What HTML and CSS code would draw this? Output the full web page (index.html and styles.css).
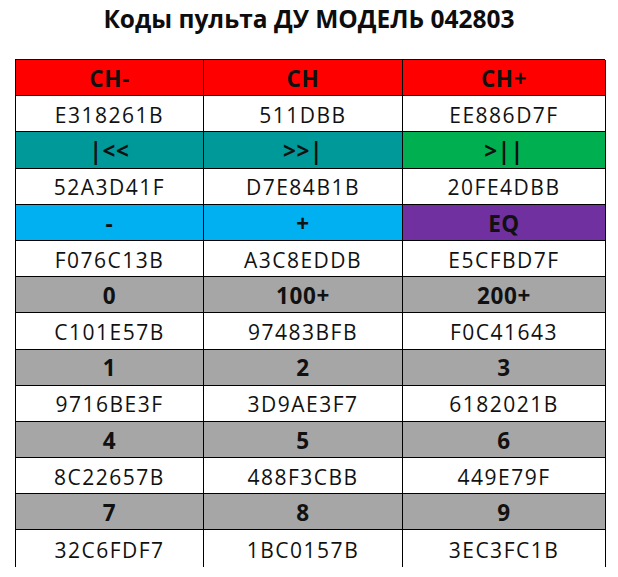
FILE: index.html
```html
<!DOCTYPE html>
<html lang="ru">
<head>
<meta charset="utf-8">
<title>Коды пульта ДУ МОДЕЛЬ 042803</title>
<link rel="stylesheet" href="styles.css">
</head>
<body>
<h1 class="title">Коды пульта ДУ МОДЕЛЬ 042803</h1>
<div class="table">
  <div class="cell head red">CH-</div>
  <div class="cell head red">CH</div>
  <div class="cell head red">CH+</div>
  <div class="cell code">E318261B</div>
  <div class="cell code">511DBB</div>
  <div class="cell code">EE886D7F</div>

  <div class="cell head teal">|&lt;&lt;</div>
  <div class="cell head teal">&gt;&gt;|</div>
  <div class="cell head green">&gt;||</div>
  <div class="cell code">52A3D41F</div>
  <div class="cell code">D7E84B1B</div>
  <div class="cell code">20FE4DBB</div>

  <div class="cell head blue">-</div>
  <div class="cell head blue">+</div>
  <div class="cell head purple">EQ</div>
  <div class="cell code">F076C13B</div>
  <div class="cell code">A3C8EDDB</div>
  <div class="cell code">E5CFBD7F</div>

  <div class="cell head gray">0</div>
  <div class="cell head gray">100+</div>
  <div class="cell head gray">200+</div>
  <div class="cell code">C101E57B</div>
  <div class="cell code">97483BFB</div>
  <div class="cell code">F0C41643</div>

  <div class="cell head gray">1</div>
  <div class="cell head gray">2</div>
  <div class="cell head gray">3</div>
  <div class="cell code">9716BE3F</div>
  <div class="cell code">3D9AE3F7</div>
  <div class="cell code">6182021B</div>

  <div class="cell head gray">4</div>
  <div class="cell head gray">5</div>
  <div class="cell head gray">6</div>
  <div class="cell code">8C22657B</div>
  <div class="cell code">488F3CBB</div>
  <div class="cell code">449E79F</div>

  <div class="cell head gray">7</div>
  <div class="cell head gray">8</div>
  <div class="cell head gray">9</div>
  <div class="cell code last">32C6FDF7</div>
  <div class="cell code last">1BC0157B</div>
  <div class="cell code last">3EC3FC1B</div>
</div>
</body>
</html>
```
FILE: styles.css
```css
html, body {
  margin: 0;
  padding: 0;
  background: #ffffff;
}
body {
  font-family: "Open Sans", "Liberation Sans", sans-serif;
  color: #000000;
}
.title {
  margin: 0;
  padding-top: 2px;
  height: 57px;
  box-sizing: border-box;
  text-align: center;
  font-size: 24.5px;
  font-weight: 700;
  line-height: 34px;
  color: #0d0d0d;
}
.table {
  margin-left: 15px;
  width: 590px;
  display: grid;
  grid-template-columns: 188px 199px 203px;
  grid-auto-rows: 36.2px;
  border-top: 1px solid #000;
  border-left: 1px solid #000;
  box-sizing: border-box;
  margin-top: 2px;
}
.cell {
  border-right: 1px solid #000;
  border-bottom: 1px solid #000;
  display: flex;
  align-items: center;
  justify-content: center;
  padding-top: 3px;
  box-sizing: border-box;
  font-size: 21px;
  line-height: 1;
  color: #111;
}
.cell.last {
  border-bottom: none;
}
.head {
  font-weight: 700;
  font-size: 22.5px;
  letter-spacing: 0.6px;
}
.code {
  font-weight: 400;
  letter-spacing: 1.5px;
  background: #ffffff;
}
.red { background: #ff0000; }
.teal { background: #009999; }
.green { background: #00b050; }
.blue { background: #00b0f0; }
.purple { background: #7030a0; }
.gray { background: #a6a6a6; }
```
